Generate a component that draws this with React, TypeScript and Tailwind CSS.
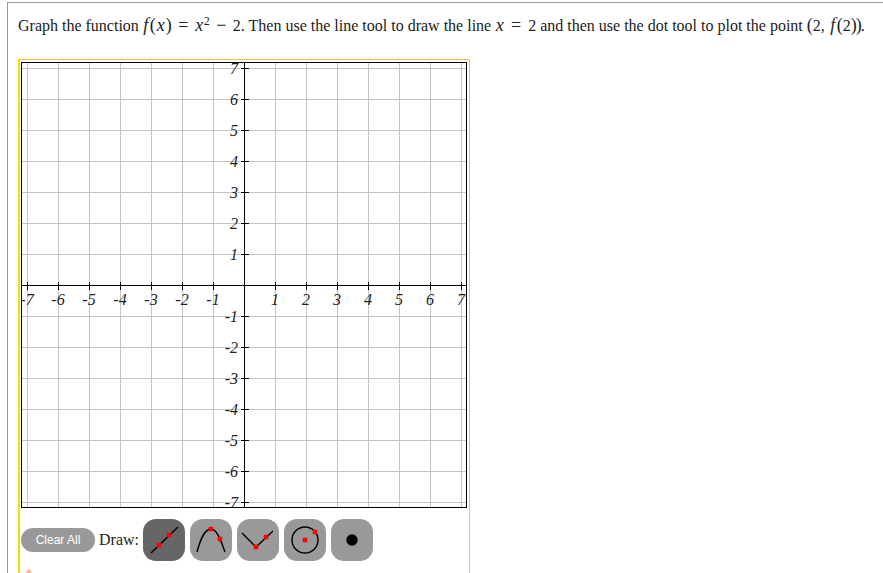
const xs = [-7,-6,-5,-4,-3,-2,-1,0,1,2,3,4,5,6,7];
const px = (n: number) => 223 + n * 31;
const py = (n: number) => 223 - n * 31;

function Board() {
  return (
    <svg width="446" height="446" viewBox="0 0 446 446" className="block">
      <g transform="translate(0.5 0.5)">
        {xs.map((n) => (
          <g key={n} stroke="#c4c4c4" strokeWidth="1" shapeRendering="crispEdges">
            <line x1={px(n)} y1="0" x2={px(n)} y2="446" />
            <line x1="0" y1={py(n)} x2="446" y2={py(n)} />
          </g>
        ))}
        <g stroke="#000" strokeWidth="1" shapeRendering="crispEdges">
          <line x1={px(0)} y1="0" x2={px(0)} y2="446" />
          <line x1="0" y1={py(0)} x2="446" y2={py(0)} />
          {xs.filter((n) => n !== 0).map((n) => (
            <g key={n}>
              <line x1={px(n)} y1={py(0) - 4} x2={px(n)} y2={py(0) + 4} />
              <line x1={px(0) - 4} y1={py(n)} x2={px(0) + 4} y2={py(n)} />
            </g>
          ))}
        </g>
      </g>
      <g fontFamily="'Liberation Serif', serif" fontStyle="italic" fontSize="16" fill="#222">
        {xs.filter((n) => n !== 0).map((n) => (
          <g key={n}>
            <text x={px(n)} y={py(0) + 20} textAnchor="middle">{n}</text>
            <text x={px(0) - 6} y={py(n) + 6} textAnchor="end">{n}</text>
          </g>
        ))}
      </g>
      <rect x="0.5" y="0.5" width="445" height="445" fill="none" stroke="#000" shapeRendering="crispEdges" />
    </svg>
  );
}

function ToolButton({ active, children }: { active?: boolean; children: React.ReactNode }) {
  return (
    <div className={active ? "w-[42px] h-[42px] rounded-[13px] bg-[#666666]" : "w-[42px] h-[42px] rounded-[13px] bg-[#999999]"}>
      <svg width="42" height="42" viewBox="0 0 42 42" className="block">{children}</svg>
    </div>
  );
}

const Red = ({ x, y }: { x: number; y: number }) => <rect x={x - 2.25} y={y - 2.25} width="4.5" height="4.5" fill="#ff0000" />;

const M = ({ children, w }: { children: React.ReactNode; w: string }) => (
  <span className={"inline-block text-[18px] leading-[20px] text-center " + w}>{children}</span>
);
const V = ({ children }: { children: React.ReactNode }) => <i className="italic">{children}</i>;

export default function App() {
  return (
    <div className="w-[883px] h-[573px] overflow-hidden bg-white font-['Liberation_Serif',serif] text-[#222]">
      <div className="ml-[7px] mt-[2px] w-[900px] h-[600px] border-l border-t border-[#999999] pl-[10px] pt-[12px]">
        <p className="text-[16px] leading-[20px] whitespace-nowrap text-[#222]">
          Graph the function{" "}
          <span className="-ml-[1px]" />
          <M w="w-[8px]"><V>f</V></M><M w="w-[6px]">(</M><M w="w-[10px]"><V>x</V></M><M w="w-[6px]">)</M>
          <M w="w-[23px]">=</M><M w="w-[9px]"><V>x</V></M>
          <sup className="text-[12px] leading-none inline-block w-[6px]">2</sup>
          <M w="w-[23px]">−</M>2. Then use the line tool to draw the line{" "}
          <M w="w-[9px]"><V>x</V></M><M w="w-[24px]">=</M>2 and then use the dot tool to plot the point{" "}
          <M w="w-[6px]">(</M>2, <M w="w-[8px]"><V>f</V></M><M w="w-[6px]">(</M>2<M w="w-[5px]">)</M><M w="w-[5px]">)</M>.
        </p>
        <div className="mt-[23px] w-[452px] border-t border-r border-[#f5c83c] border-l-2 border-l-[#ffd700] pt-[2px] pl-[1px] pr-[2px] h-[600px]">
          <Board />
          <div className="flex items-center mt-[11px]">
            <button className="w-[74px] h-[24px] rounded-[12px] bg-[#999999] text-white text-[12px] font-['Liberation_Sans',sans-serif]">Clear All</button>
            <span className="ml-[4px] text-[16px] w-[44px]">Draw:</span>
            <div className="flex gap-[5px]">
              <ToolButton active>
                <line x1="8" y1="34" x2="35" y2="8" stroke="#000" strokeWidth="1.4" />
                <Red x={16} y={26} /><Red x={26} y={16} />
              </ToolButton>
              <ToolButton>
                <path d="M7 33 C10 22 14 10 21 10 C27 10 31 22 35 33" fill="none" stroke="#000" strokeWidth="1.4" />
                <Red x={21} y={10} /><Red x={30} y={20} />
              </ToolButton>
              <ToolButton>
                <path d="M5 14 L19 28 L36 12" fill="none" stroke="#000" strokeWidth="1.4" />
                <Red x={19} y={28} /><Red x={29} y={18} />
              </ToolButton>
              <ToolButton>
                <circle cx="21" cy="21" r="13" fill="none" stroke="#000" strokeWidth="1.4" />
                <Red x={21} y={21} /><Red x={31} y={13} />
              </ToolButton>
              <ToolButton>
                <circle cx="21" cy="21" r="5.7" fill="#000" />
              </ToolButton>
            </div>
          </div>
          <svg width="12" height="6" viewBox="0 0 12 6" className="block mt-[8px]">
            <path d="M1 6 L1 4 L4 4 L6 2 L8 0 L10 1 L11 6 Z" fill="#f6bb92" />
          </svg>
        </div>
      </div>
    </div>
  );
}
